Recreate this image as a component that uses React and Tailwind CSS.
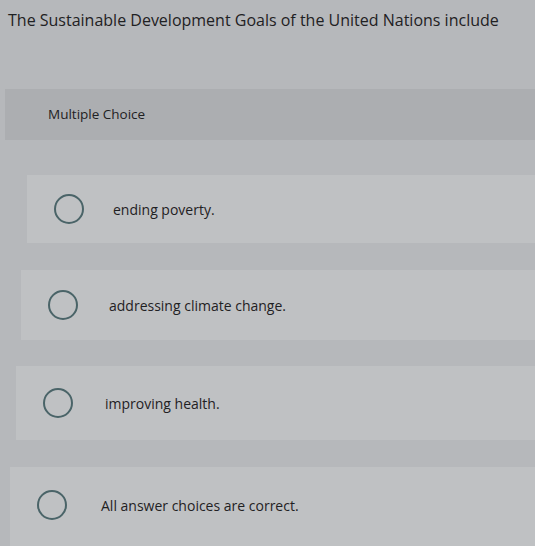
const options = [
  { text: 'ending poverty.', ml: 'ml-[27px]', h: 'h-[68px]', mt: 'mt-0', gap: 'gap-[29px]' },
  { text: 'addressing climate change.', ml: 'ml-[21px]', h: 'h-[70px]', mt: 'mt-[27px]', gap: 'gap-[31px]' },
  { text: 'improving health.', ml: 'ml-[16px]', h: 'h-[74px]', mt: 'mt-[26px]', gap: 'gap-[32px]' },
  { text: 'All answer choices are correct.', ml: 'ml-[10px]', h: 'h-[84px] pb-[8px]', mt: 'mt-[27px]', gap: 'gap-[34px]' },
];

const Radio = () => (
  <span className="block w-[30px] h-[30px] rounded-full border-2 border-[#4a6468] shrink-0" />
);

export default function App() {
  return (
    <div className="h-[546px] w-[535px] overflow-hidden bg-[#b6b8bb] text-[#1f2123]" style={{ fontFamily: '"Open Sans", "Liberation Sans", sans-serif' }}>
      <h1 className="pl-[8px] pt-[9px] text-[16px] leading-[22px]">
        The Sustainable Development Goals of the United Nations include
      </h1>

      <div className="mt-[58px] ml-[5px] h-[51px] bg-[#acaeb1] flex items-center pl-[43px] text-[13.5px]">
        Multiple Choice
      </div>

      <div className="mt-[35px] flex flex-col">
        {options.map((o) => (
          <div key={o.text} className={`${o.ml} ${o.h} ${o.mt} ${o.gap} pl-[27px] bg-[#bfc1c3] flex items-center`}>
            <Radio />
            <span className="text-[14px]">{o.text}</span>
          </div>
        ))}
      </div>
    </div>
  );
}
